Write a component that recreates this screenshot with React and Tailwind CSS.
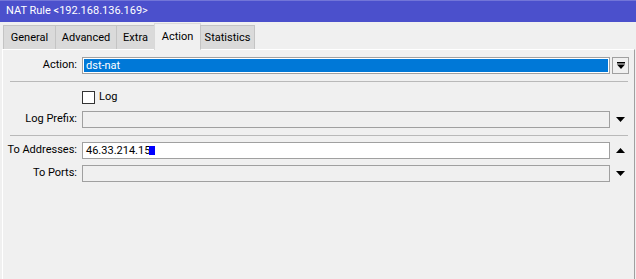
import React from "react";

const Down = () => (
  <svg width="9" height="5" viewBox="0 0 9 5">
    <path d="M0 0h9L4.5 5z" fill="#000" />
  </svg>
);

const Up = () => (
  <svg width="9" height="5" viewBox="0 0 9 5">
    <path d="M0 5h9L4.5 0z" fill="#000" />
  </svg>
);

const tabs = [
  { name: "General", w: "w-[53px]" },
  { name: "Advanced", w: "w-[62px]" },
  { name: "Extra", w: "w-[39px]" },
  { name: "Action", w: "w-[47px]" },
  { name: "Statistics", w: "w-[55px]" },
];

const Row = ({ label, children, side }) => (
  <div className="flex items-center h-[17px]">
    <div className="w-[75px] text-right pr-[1px]">{label}</div>
    <div className="ml-[4px] w-[528px] h-[17px]">{children}</div>
    <div className="w-[17px] ml-[2px] h-[17px] flex items-center justify-center">{side}</div>
  </div>
);

const Sep = () => <div className="ml-[7px] w-[618px] border-t border-[#b9b9b9]" />;

export default function App() {
  return (
    <div
      className="w-[636px] h-[279px] bg-[#f0f0f0] text-[11px] text-black flex flex-col overflow-hidden"
      style={{ fontFamily: "Roboto, 'Liberation Sans', sans-serif" }}
    >
      {/* title bar */}
      <div className="h-[22px] bg-[#4b50cc] border-t border-[#7275d8] text-white text-[11px] flex items-center pl-[6px]">
        NAT Rule &lt;192.168.136.169&gt;
      </div>

      {/* tabs */}
      <div className="h-[27px] flex items-end pl-[3px] relative z-10">
        {tabs.map((t, i) =>
          t.name === "Action" ? (
            <div
              key={t.name}
              className={`${t.w} h-[27px] -ml-[1px] bg-[#f0f0f0] border border-b-0 border-[#d9d9d9] flex items-center justify-center -mb-[1px]`}
            >
              {t.name}
            </div>
          ) : (
            <div
              key={t.name}
              className={`${t.w} h-[24px] bg-[#dadada] border border-b-0 border-[#c4c4c4] ${i === 0 ? "" : "-ml-[1px]"} flex items-center justify-center pt-[2px]`}
            >
              {t.name}
            </div>
          )
        )}
      </div>

      {/* panel */}
      <div className="flex-1 ml-[2px] w-[633px] border-t border-l border-white border-r border-r-[#a0a0a0] flex flex-col">
        <div className="mt-[7px]">
          <Row
            label="Action:"
            side={
              <div className="w-[17px] h-[17px] border border-[#a0a0a0] bg-[#f0f0f0] flex flex-col items-center justify-center">
                <svg width="8" height="7" viewBox="0 0 8 7">
                  <rect x="0" y="0" width="8" height="1.5" fill="#000" />
                  <path d="M0 2.5h8L4 7z" fill="#000" />
                </svg>
              </div>
            }
          >
            <div className="h-full border border-[#a0a0a0] bg-white p-[1px]">
              <div className="h-full bg-[#0078d7] text-white flex items-center pl-[2px] leading-none">dst-nat</div>
            </div>
          </Row>
        </div>

        <div className="mt-[7px]">
          <Sep />
        </div>

        <div className="mt-[9px] h-[13px] flex items-center">
          <div className="ml-[79px] w-[13px] h-[13px] border border-[#333] bg-white" />
          <span className="ml-[4px]">Log</span>
        </div>

        <div className="mt-[7px]">
          <Row label="Log Prefix:" side={<Down />}>
            <div className="h-full border border-[#a0a0a0] bg-[#f0f0f0]" />
          </Row>
        </div>

        <div className="mt-[7px]">
          <Sep />
        </div>

        <div className="mt-[6px]">
          <Row label="To Addresses:" side={<Up />}>
            <div className="h-full border border-[#a0a0a0] bg-white flex items-center pl-[3px] leading-none">
              <span>46.33.214.15</span>
              <span className="inline-block w-[6px] h-[9px] bg-[#0000ff] -ml-[1px]" />
            </div>
          </Row>
        </div>

        <div className="mt-[6px]">
          <Row label="To Ports:" side={<Down />}>
            <div className="h-full border border-[#a0a0a0] bg-[#f0f0f0]" />
          </Row>
        </div>
      </div>
    </div>
  );
}
